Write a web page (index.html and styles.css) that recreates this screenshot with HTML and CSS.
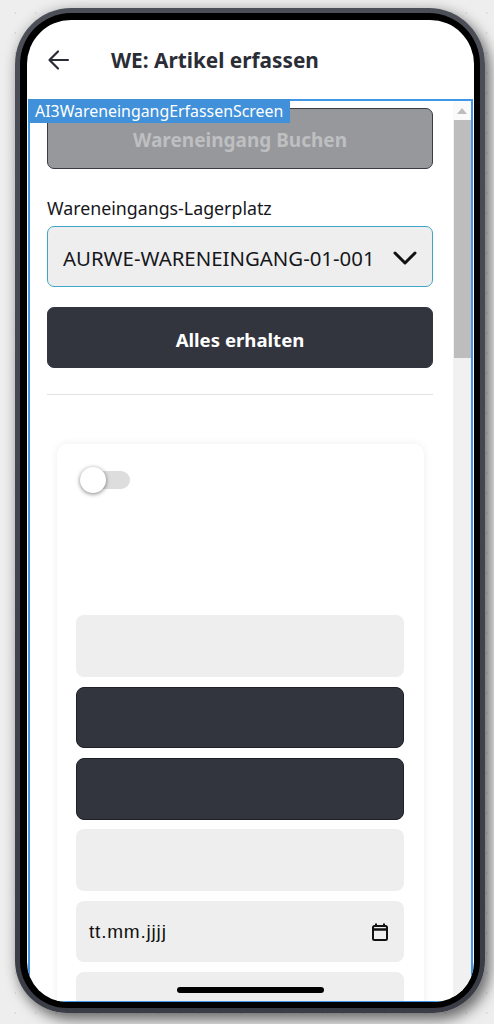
FILE: index.html
```html
<!DOCTYPE html>
<html lang="de">
<head>
<meta charset="utf-8">
<title>WE: Artikel erfassen</title>
<link rel="stylesheet" href="styles.css">
</head>
<body>
<div class="phone">
  <div class="bezel">
    <div class="screen">
      <header class="appbar">
        <svg class="back" width="24" height="24" viewBox="0 0 24 24" fill="none" stroke="#2b2d36" stroke-width="2.2" stroke-linecap="round" stroke-linejoin="round"><path d="M22 12H3.5M12 3.5 3.5 12l8.5 8.5"/></svg>
        <h1 class="title">WE: Artikel erfassen</h1>
      </header>
      <div class="frame">
        <span class="tag">AI3WareneingangErfassenScreen</span>
        <main class="content">
          <button class="btn btn-disabled">Wareneingang Buchen</button>
          <label class="label">Wareneingangs-Lagerplatz</label>
          <div class="select">
            <span>AURWE-WARENEINGANG-01-001</span>
            <svg width="24" height="16" viewBox="0 0 24 16" fill="none" stroke="#111" stroke-width="3" stroke-linecap="round" stroke-linejoin="round"><path d="M2 3l10 10L22 3"/></svg>
          </div>
          <button class="btn btn-dark">Alles erhalten</button>
          <hr class="rule">
          <section class="card">
            <div class="toggle"><span class="knob"></span></div>
            <div class="fields">
              <div class="field"></div>
              <div class="field field-dark"></div>
              <div class="field field-dark"></div>
              <div class="field"></div>
              <div class="field field-date">
                <span>tt.mm.jjjj</span>
                <svg width="18" height="20" viewBox="0 0 18 20" fill="none" stroke="#111" stroke-width="2"><rect x="2" y="4" width="14" height="14" rx="1.5"/><path d="M2 7.5h14" stroke-width="2.4"/><path d="M5 1.5v3M13 1.5v3"/></svg>
              </div>
              <div class="field"></div>
            </div>
          </section>
        </main>
        <div class="scrollbar">
          <div class="sb-btn"><span class="sb-arrow"></span></div>
          <div class="sb-thumb"></div>
        </div>
      </div>
      <div class="home"></div>
    </div>
  </div>
</div>
</body>
</html>
```
FILE: styles.css
```css
* { box-sizing: border-box; }
html, body { margin: 0; height: 100%; }
body {
  background-color: #eeeeee;
  background-image: radial-gradient(circle at center, #d2d2d2 0, #d2d2d2 .7px, transparent 1px);
  background-size: 20.5px 20px;
  background-position: 5px 3px;
  font-family: "Noto Sans", "Open Sans", sans-serif;
  overflow: hidden;
}
.phone {
  width: 470px;
  height: 1005px;
  margin: 8px 0 0 15px;
  padding: 5px;
  border-radius: 56px 56px 52px 52px;
  background: linear-gradient(#4c4f57, #3a3c46);
  box-shadow: 5px 7px 14px rgba(0, 0, 0, .5), 0 0 14px rgba(0, 0, 0, .14);
}
.bezel {
  height: 100%;
  padding: 7px 6px 6px 7px;
  border-radius: 51px 51px 47px 47px;
  background: #000;
}
.screen {
  position: relative;
  height: 100%;
  border-radius: 44px 44px 40px 40px;
  background: #fff;
  overflow: hidden;
  display: flex;
  flex-direction: column;
}
.appbar {
  flex: 0 0 79px;
  display: flex;
  align-items: center;
  padding: 0 0 0 19px;
}
.back { flex: none; }
.title {
  margin: 1px 0 0 41px;
  font-size: 20.8px;
  line-height: 28px;
  font-weight: 700;
  color: #2b2d36;
}
.frame {
  position: relative;
  flex: 1;
  min-height: 0;
  display: flex;
  margin: 0 1px -1px;
  border: 2px solid #3f97e6;
}
.tag {
  position: absolute;
  top: -2px;
  left: -2px;
  z-index: 1;
  height: 24px;
  width: 262px;
  padding-left: 7px;
  background: #4090da;
  color: #fff;
  font-size: 15.9px;
  line-height: 24px;
  white-space: nowrap;
}
.content {
  flex: 1;
  min-width: 0;
  padding: 7px 20px 0 17px;
  overflow: hidden;
}
.btn {
  display: block;
  width: 100%;
  height: 61px;
  border-radius: 7px;
  font: 700 19px "Noto Sans", "Open Sans", sans-serif;
  padding: 3px 0 0;
}
.btn-disabled {
  background: #97989c;
  border: 1px solid #3a3c45;
  color: #bebfc1;
}
.btn-dark {
  margin-top: 20px;
  background: #32343e;
  border: 1px solid #32343e;
  color: #fff;
  font-size: 18.6px;
}
.label {
  display: block;
  margin-top: 27px;
  font-size: 17.8px;
  line-height: 24px;
  color: #16171c;
}
.select {
  margin-top: 6px;
  height: 61px;
  padding: 2px 15px 0 15px;
  display: flex;
  align-items: center;
  justify-content: space-between;
  background: #eeeeee;
  border: 1px solid #3fa6c9;
  border-radius: 7px;
  font-size: 20.4px;
  color: #16171c;
  white-space: nowrap;
}
.rule {
  margin: 26px 0 0;
  border: 0;
  border-top: 1px solid #e3e3e3;
}
.card {
  margin: 49px 9px 0 10px;
  height: 700px;
  padding: 27px 20px 0 19px;
  border-radius: 10px;
  background: #fff;
  box-shadow: 0 0 8px rgba(0, 0, 0, .07);
}
.toggle {
  position: relative;
  width: 50px;
  height: 18px;
  border-radius: 9px;
  margin-left: 4px;
  background: #dddddd;
}
.knob {
  position: absolute;
  top: -4px;
  left: 0;
  width: 26px;
  height: 26px;
  border-radius: 50%;
  background: #fff;
  box-shadow: 0 1px 4px rgba(0, 0, 0, .5);
}
.fields {
  margin-top: 126.2px;
  display: flex;
  flex-direction: column;
  gap: 9.8px;
}
.field {
  flex: none;
  height: 61.6px;
  border-radius: 8px;
  background: #eeeeee;
}
.field-dark {
  background: #32343e;
  border: 1px solid #1e2027;
}
.field-date {
  display: flex;
  align-items: center;
  justify-content: space-between;
  padding: 0 15px 0 13px;
  font-family: "Liberation Sans", Arial, sans-serif;
  font-size: 19px;
  letter-spacing: .8px;
  color: #111;
}
.scrollbar {
  flex: 0 0 18px;
  background: #f1f1f1;
}
.sb-btn {
  height: 19px;
  background: #fafafa;
  display: flex;
  align-items: center;
  justify-content: center;
}
.sb-arrow {
  width: 0;
  height: 0;
  border-left: 5px solid transparent;
  border-right: 5px solid transparent;
  border-bottom: 6px solid #bdbdbd;
}
.sb-thumb {
  height: 238px;
  margin-left: 1px;
  background: #bdbdbd;
}
.home {
  position: absolute;
  left: 150px;
  bottom: 9px;
  width: 147px;
  height: 6px;
  border-radius: 3px;
  background: #000;
}
```
